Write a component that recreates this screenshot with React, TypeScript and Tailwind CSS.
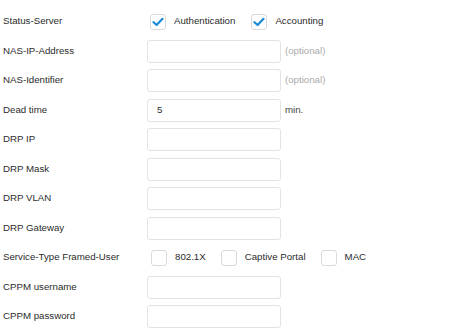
import React from "react";

const font = { fontFamily: '"Liberation Sans", Arial, sans-serif' };

function Box({ checked }: { checked?: boolean }) {
  return (
    <span className="flex h-[16px] w-[16px] shrink-0 items-center justify-center rounded-[3px] border border-[#d9d9d9] bg-white">
      {checked && (
        <svg width="12" height="10" viewBox="0 0 12 10">
          <path d="M1.5 5.2 L4.6 8 L10.5 1.8" fill="none" stroke="#1a8ad4" strokeWidth="2.2" strokeLinecap="round" strokeLinejoin="round" />
        </svg>
      )}
    </span>
  );
}

function Check({ label, checked, mr }: { label: string; checked?: boolean; mr: string }) {
  return (
    <span className={`flex items-center ${mr}`}>
      <Box checked={checked} />
      <span className="ml-[8px] text-[#2b2b2b]">{label}</span>
    </span>
  );
}

function Input({ value }: { value?: string }) {
  return (
    <div className="flex h-[23px] w-[134px] items-center rounded-[3px] border border-[#e3e3e3] bg-white pl-[9px] text-[#2b2b2b]">
      {value}
    </div>
  );
}

function Row({ label, children }: { label: string; children: React.ReactNode }) {
  return (
    <div className="flex h-[29.5px] items-center">
      <div className="w-[147px] shrink-0 pl-[3px] text-[#2b2b2b]">{label}</div>
      <div className="flex items-center">{children}</div>
    </div>
  );
}

export default function App() {
  return (
    <div className="h-[336px] w-[474px] bg-white pt-[7px] text-[9.7px]" style={font}>
      <Row label="Status-Server">
        <span className="ml-[3px] flex items-center">
          <Check label="Authentication" checked mr="mr-[16px]" />
          <Check label="Accounting" checked mr="" />
        </span>
      </Row>
      <Row label="NAS-IP-Address">
        <Input />
        <span className="ml-[4px] text-[#aaa]">(optional)</span>
      </Row>
      <Row label="NAS-Identifier">
        <Input />
        <span className="ml-[4px] text-[#aaa]">(optional)</span>
      </Row>
      <Row label="Dead time">
        <Input value="5" />
        <span className="ml-[4px] text-[#444]">min.</span>
      </Row>
      <Row label="DRP IP">
        <Input />
      </Row>
      <Row label="DRP Mask">
        <Input />
      </Row>
      <Row label="DRP VLAN">
        <Input />
      </Row>
      <Row label="DRP Gateway">
        <Input />
      </Row>
      <Row label="Service-Type Framed-User">
        <span className="ml-[4px] flex items-center">
          <Check label="802.1X" mr="mr-[15px]" />
          <Check label="Captive Portal" mr="mr-[15px]" />
          <Check label="MAC" mr="" />
        </span>
      </Row>
      <Row label="CPPM username">
        <Input />
      </Row>
      <Row label="CPPM password">
        <Input />
      </Row>
    </div>
  );
}
